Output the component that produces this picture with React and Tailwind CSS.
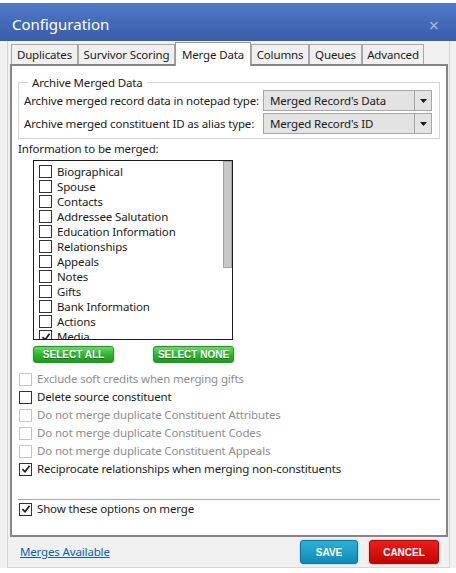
import React from "react";

function Box({ checked = false, disabled = false }) {
  return (
    <span
      className={
        disabled
          ? "w-[13px] h-[13px] shrink-0 border border-[#c4c4c4] bg-white flex items-center justify-center"
          : "w-[13px] h-[13px] shrink-0 border border-[#333333] bg-white flex items-center justify-center"
      }
    >
      {checked && (
        <svg width="10" height="10" viewBox="0 0 10 10">
          <path d="M1.5 5.2 L4 7.8 L8.6 1.8" fill="none" stroke="#1a1a1a" strokeWidth="1.7" />
        </svg>
      )}
    </span>
  );
}

const items = [
  "Biographical",
  "Spouse",
  "Contacts",
  "Addressee Salutation",
  "Education Information",
  "Relationships",
  "Appeals",
  "Notes",
  "Gifts",
  "Bank Information",
  "Actions",
  "Media",
];

const options = [
  { t: "Exclude soft credits when merging gifts", d: true, c: false },
  { t: "Delete source constituent", d: false, c: false },
  { t: "Do not merge duplicate Constituent Attributes", d: true, c: false },
  { t: "Do not merge duplicate Constituent Codes", d: true, c: false },
  { t: "Do not merge duplicate Constituent Appeals", d: true, c: false },
  { t: "Reciprocate relationships when merging non-constituents", d: false, c: true },
];

const tabs = [
  { t: "Duplicates", w: "w-[67px]" },
  { t: "Survivor Scoring", w: "w-[97px]" },
  { t: "Merge Data", w: "w-[76px]", active: true },
  { t: "Columns", w: "w-[58px]" },
  { t: "Queues", w: "w-[53px]" },
  { t: "Advanced", w: "w-[62px]" },
];

function Select({ value }) {
  return (
    <div className="w-[169px] h-[21px] border border-[#a6a6a6] bg-[#e3e3e3] flex items-stretch">
      <div className="flex-1 pl-[6px] flex items-center text-[#1a1a1a]">{value}</div>
      <div className="w-[17px] border-l border-[#a6a6a6] flex items-center justify-center">
        <svg width="7" height="4" viewBox="0 0 7 4">
          <path d="M0 0 H7 L3.5 4 Z" fill="#1a1a1a" />
        </svg>
      </div>
    </div>
  );
}

export default function App() {
  return (
    <div className="w-[456px] h-[573px] bg-white flex flex-col font-['Noto_Sans',sans-serif] text-[11.5px] tracking-[-0.15px] text-[#1a1a1a] overflow-hidden">
      <div className="h-[3px] bg-white" />
      <div className="h-[38px] bg-gradient-to-b from-[#5079c8] to-[#3a5da7] flex items-center justify-between pt-[5px] pl-[12px] pr-[17px]">
        <span className="text-white text-[15px] tracking-normal leading-none">Configuration</span>
        <span className="text-[#a9badb] text-[18px] leading-none">×</span>
      </div>
      <div className="bg-[#f0f0f0] flex-1 flex flex-col">
        <div className="ml-[7px] w-[443px] flex-1 flex flex-col border-x border-b border-[#d6d6d6]">
          <div className="pt-[1px] pl-[3px] flex items-end">
            {tabs.map((tb) =>
              tb.active ? (
                <div
                  key={tb.t}
                  className={`${tb.w} h-[24px] -mb-[2px] relative z-10 bg-white border-x border-t border-[#9a9a9a] flex items-start justify-center pt-[3px]`}
                >
                  {tb.t}
                </div>
              ) : (
                <div
                  key={tb.t}
                  className={`${tb.w} h-[20px] bg-[#f0f0f0] border-x border-t border-[#a8a8a8] flex items-center justify-center`}
                >
                  {tb.t}
                </div>
              )
            )}
          </div>
          <div className="ml-[2px] w-[438px] h-[473px] border-2 border-[#858585] bg-white px-[6px] flex flex-col">
            <fieldset className="mt-[9px] border border-[#d4d4d4] pl-[5px] pr-[6px] pb-[4px] flex flex-col gap-[2px]">
              <legend className="ml-[4px] px-[4px] leading-[15px]">Archive Merged Data</legend>
              <div className="flex items-center">
                <span className="w-[239px] whitespace-nowrap">Archive merged record data in notepad type:</span>
                <Select value="Merged Record's Data" />
              </div>
              <div className="flex items-center">
                <span className="w-[239px] whitespace-nowrap">Archive merged constituent ID as alias type:</span>
                <Select value="Merged Record's ID" />
              </div>
            </fieldset>
            <div className="mt-[2px] leading-[15px]">Information to be merged:</div>
            <div className="mt-[4px] ml-[15px] w-[200px] h-[180px] border border-[#1a1a1a] flex overflow-hidden">
              <div className="flex-1 pt-[3px] pl-[5px] flex flex-col overflow-hidden">
                {items.map((it, i) => (
                  <div key={it} className="h-[15px] shrink-0 flex items-center gap-[5px]">
                    <Box checked={i === items.length - 1} />
                    <span className="leading-[15px] whitespace-nowrap">{it}</span>
                  </div>
                ))}
              </div>
              <div className="w-[9px] flex flex-col">
                <div className="h-[107px] bg-[#c8c8c8] border border-[#a3a3a3]" />
              </div>
            </div>
            <div className="mt-[6px] ml-[15px] flex gap-[39px]">
              <button className="w-[81px] h-[17px] rounded-[3px] border border-[#2d8f2d] bg-gradient-to-b from-[#6ad86a] via-[#2fb52f] to-[#1c9a1c] shadow-[0_0_2px_#7fd67f] text-white font-['Liberation_Sans',Arial,sans-serif] font-bold text-[10px] tracking-normal leading-none [text-shadow:0_1px_0_#1a6b1a]">
                SELECT ALL
              </button>
              <button className="w-[81px] h-[17px] rounded-[3px] border border-[#2d8f2d] bg-gradient-to-b from-[#6ad86a] via-[#2fb52f] to-[#1c9a1c] shadow-[0_0_2px_#7fd67f] text-white font-['Liberation_Sans',Arial,sans-serif] font-bold text-[10px] tracking-normal leading-none [text-shadow:0_1px_0_#1a6b1a]">
                SELECT NONE
              </button>
            </div>
            <div className="mt-[7px] flex flex-col">
              {options.map((o) => (
                <div key={o.t} className="h-[18px] pl-[1px] flex items-center gap-[5px]">
                  <Box checked={o.c} disabled={o.d} />
                  <span className={o.d ? "text-[#8d8d8d] whitespace-nowrap" : "whitespace-nowrap"}>{o.t}</span>
                </div>
              ))}
            </div>
            <div className="mt-[21px] h-px bg-[#a8a8a8]" />
            <div className="h-[18px] pl-[1px] flex items-center gap-[5px]">
              <Box checked />
              <span>Show these options on merge</span>
            </div>
          </div>
          <div className="flex-1 flex items-center pl-[12px] pr-[10px]">
            <a className="text-[#0b5cc2] underline flex-1 cursor-pointer">Merges Available</a>
            <div className="flex gap-[11px]">
              <button className="w-[58px] h-[24px] rounded-[3px] border border-[#137299] bg-gradient-to-b from-[#2eb0d8] to-[#0d8bb6] shadow-[0_0_2px_#7fc6de] text-white font-['Liberation_Sans',Arial,sans-serif] font-bold text-[10px] tracking-normal">
                SAVE
              </button>
              <button className="w-[70px] h-[24px] rounded-[3px] border border-[#a80d0d] bg-gradient-to-b from-[#ec1c1c] to-[#c60000] shadow-[0_0_2px_#e28585] text-white font-['Liberation_Sans',Arial,sans-serif] font-bold text-[10px] tracking-normal">
                CANCEL
              </button>
            </div>
          </div>
        </div>
        <div className="h-[5px] bg-white" />
      </div>
    </div>
  );
}
